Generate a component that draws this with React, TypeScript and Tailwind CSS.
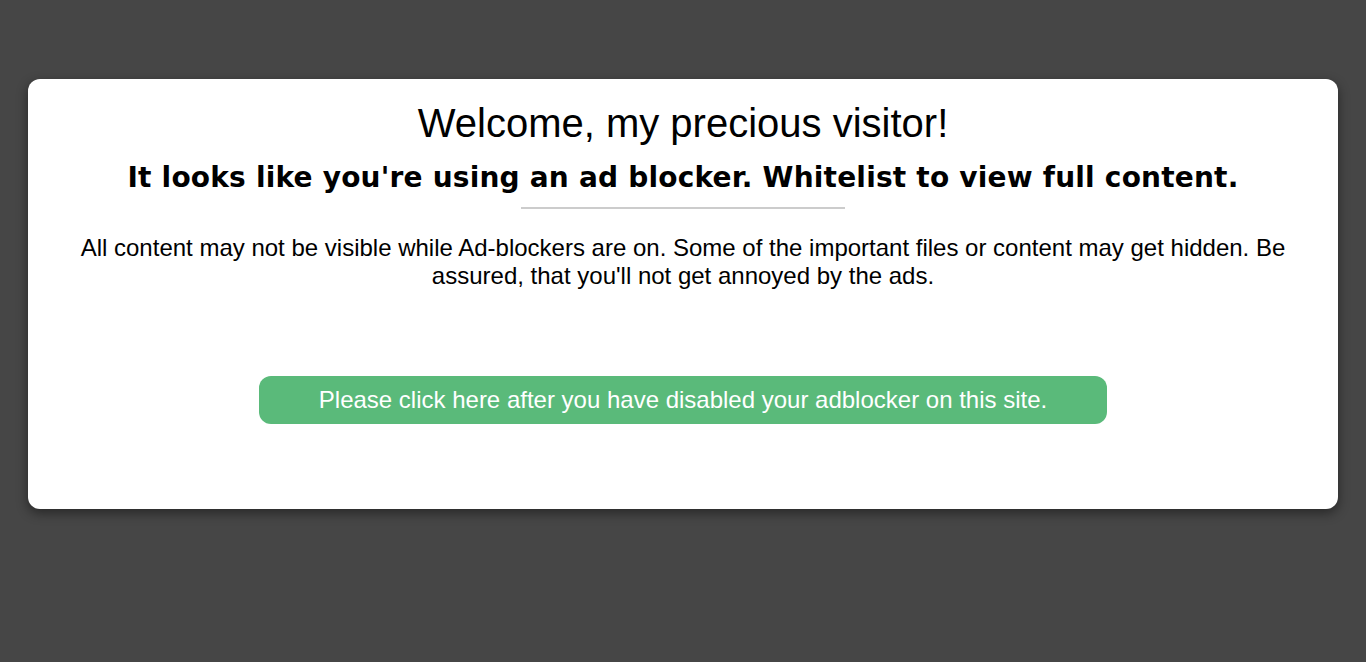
export default function App() {
  return (
    <div className="min-h-[662px] bg-[#464646] pt-[79px] px-[28px] font-['Liberation_Sans',Arial,sans-serif]">
      <div className="bg-white rounded-[12px] shadow-[0_4px_12px_rgba(0,0,0,0.45)] h-[430px] flex flex-col items-center text-center text-black px-[40px]">
        <h1 className="mt-[21px] text-[40px] leading-[46px]">Welcome, my precious visitor!</h1>
        <h2 className="mt-[16px] text-[28px] leading-[32px] font-bold tracking-[0.2px] font-['DejaVu_Sans',sans-serif]">
          It looks like you're using an ad blocker. Whitelist to view full content.
        </h2>
        <div className="mt-[13px] w-[324px] h-[2px] bg-[#cccccc]" />
        <p className="mt-[25px] text-[24px] leading-[28px]">
          All content may not be visible while Ad-blockers are on. Some of the important files or content may get hidden. Be assured, that you'll not get annoyed by the ads.
        </p>
        <button className="mt-[86px] w-[848px] h-[48px] rounded-[12px] bg-[#5aba7a] text-white text-[24px]">
          Please click here after you have disabled your adblocker on this site.
        </button>
      </div>
    </div>
  );
}
